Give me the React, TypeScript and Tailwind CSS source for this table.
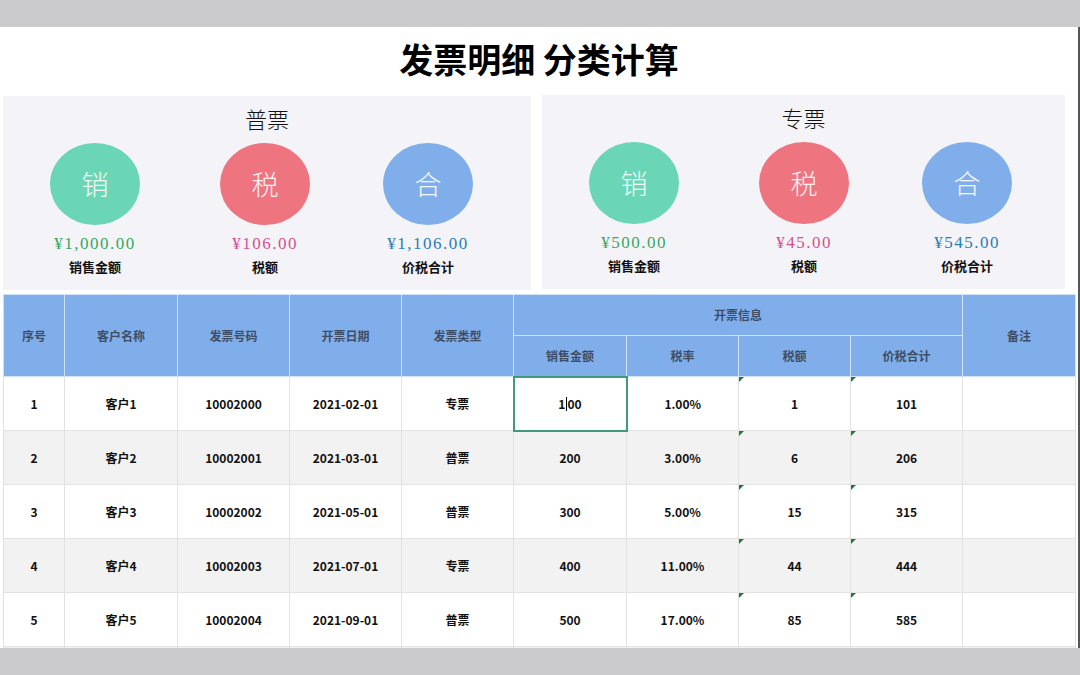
import React from "react";

type Stat = {
  char: string;
  value: string;
  label: string;
  circle: string;
  valueColor: string;
};

type Row = {
  no: number;
  name: string;
  code: string;
  date: string;
  kind: string;
  amount: string;
  rate: string;
  tax: string;
  total: string;
};

const plainStats: Stat[] = [
  { char: "销", value: "¥1,000.00", label: "销售金额", circle: "bg-[#6ad6b6]", valueColor: "text-[#35a866]" },
  { char: "税", value: "¥106.00", label: "税额", circle: "bg-[#ee747f]", valueColor: "text-[#d4508c]" },
  { char: "合", value: "¥1,106.00", label: "价税合计", circle: "bg-[#80aeea]", valueColor: "text-[#2b7db3]" },
];

const specialStats: Stat[] = [
  { char: "销", value: "¥500.00", label: "销售金额", circle: "bg-[#6ad6b6]", valueColor: "text-[#35a866]" },
  { char: "税", value: "¥45.00", label: "税额", circle: "bg-[#ee747f]", valueColor: "text-[#d4508c]" },
  { char: "合", value: "¥545.00", label: "价税合计", circle: "bg-[#80aeea]", valueColor: "text-[#2b7db3]" },
];

const rows: Row[] = [
  { no: 1, name: "客户1", code: "10002000", date: "2021-02-01", kind: "专票", amount: "100", rate: "1.00%", tax: "1", total: "101" },
  { no: 2, name: "客户2", code: "10002001", date: "2021-03-01", kind: "普票", amount: "200", rate: "3.00%", tax: "6", total: "206" },
  { no: 3, name: "客户3", code: "10002002", date: "2021-05-01", kind: "普票", amount: "300", rate: "5.00%", tax: "15", total: "315" },
  { no: 4, name: "客户4", code: "10002003", date: "2021-07-01", kind: "专票", amount: "400", rate: "11.00%", tax: "44", total: "444" },
  { no: 5, name: "客户5", code: "10002004", date: "2021-09-01", kind: "普票", amount: "500", rate: "17.00%", tax: "85", total: "585" },
  { no: 6, name: "", code: "", date: "", kind: "", amount: "", rate: "", tax: "", total: "" },
];

const sans = "font-['Noto_Sans_CJK_SC','Noto_Sans',sans-serif]";
const serif = "font-['Liberation_Serif','Noto_Sans_CJK_SC',serif]";

function SummaryPanel({ title, stats }: { title: string; stats: Stat[] }) {
  return (
    <div className="h-full bg-[#f4f4f8]">
      <div className={`pt-[7px] text-center text-[22px] leading-[30px] font-light text-[#111] ${sans}`}>{title}</div>
      <div className="mt-[10px] grid grid-cols-[170px_170px_156px] pl-[7px]">
        {stats.map((s) => (
          <div key={s.label} className="flex flex-col items-center">
            <div
              className={`flex h-[82px] w-[90px] items-center justify-center rounded-[50%] ${s.circle} text-[27px] font-light text-white/90 ${sans}`}
            >
              {s.char}
            </div>
            <div className={`mt-[9px] text-[17px] leading-[20px] tracking-[1.5px] ${s.valueColor} ${serif}`}>
              {s.value}
            </div>
            <div className={`mt-[4px] text-[13px] leading-[18px] font-bold text-[#111] ${sans}`}>{s.label}</div>
          </div>
        ))}
      </div>
    </div>
  );
}

function Corner() {
  return (
    <span className="absolute left-0 top-0 h-0 w-0 border-t-[5px] border-r-[5px] border-t-[#1f7a3a] border-r-transparent" />
  );
}

export default function App() {
  const head = "border border-[#cfe2f6] bg-[#80aeea] text-[12px] font-bold text-[#3e4d66]";
  const cell = "border border-[#e2e2e2] text-center text-[12px] font-bold text-[#111]";

  return (
    <div className={`flex h-[675px] w-[1080px] flex-col overflow-hidden bg-[#cbcacc] ${sans}`}>
      <div className="h-[27px] shrink-0" />
      <div className="flex h-[621px] shrink-0 flex-col overflow-hidden border-r-[2px] border-r-[#555] bg-white">
        <h1 className="shrink-0 pt-[11px] text-center text-[34px] leading-[42px] font-bold text-black">发票明细 分类计算</h1>
        <div className="mt-[16px] flex h-[194px] shrink-0 gap-[11px] pl-[3px] pr-[13px]">
          <div className="w-[528px]">
            <SummaryPanel title="普票" stats={plainStats} />
          </div>
          <div className="w-[523px] -translate-y-[1px]">
            <SummaryPanel title="专票" stats={specialStats} />
          </div>
        </div>
        <div className="mt-[4px] shrink-0 pl-[3px]">
          <table className="w-[1072px] table-fixed border-collapse">
            <colgroup>
              <col className="w-[61px]" />
              <col className="w-[113px]" />
              <col className="w-[112px]" />
              <col className="w-[112px]" />
              <col className="w-[112px]" />
              <col className="w-[113px]" />
              <col className="w-[112px]" />
              <col className="w-[112px]" />
              <col className="w-[112px]" />
              <col className="w-[113px]" />
            </colgroup>
            <thead>
              <tr className="h-[41px]">
                <th rowSpan={2} className={head}>序号</th>
                <th rowSpan={2} className={head}>客户名称</th>
                <th rowSpan={2} className={head}>发票号码</th>
                <th rowSpan={2} className={head}>开票日期</th>
                <th rowSpan={2} className={head}>发票类型</th>
                <th colSpan={4} className={head}>开票信息</th>
                <th rowSpan={2} className={head}>备注</th>
              </tr>
              <tr className="h-[41px]">
                <th className={head}>销售金额</th>
                <th className={head}>税率</th>
                <th className={head}>税额</th>
                <th className={head}>价税合计</th>
              </tr>
            </thead>
            <tbody>
              {rows.map((r, i) => (
                <tr key={r.no} className={`h-[54px] ${i % 2 === 1 ? "bg-[#f2f2f2]" : "bg-white"}`}>
                  <td className={cell}>{r.no <= 5 ? r.no : ""}</td>
                  <td className={cell}>{r.name}</td>
                  <td className={cell}>{r.code}</td>
                  <td className={cell}>{r.date}</td>
                  <td className={cell}>{r.kind}</td>
                  <td className={i === 0 ? "border-2 border-[#3e9c7c] text-center text-[12px] font-bold text-[#111]" : cell}>
                    {i === 0 ? (
                      <span>
                        1<span className="mx-[0.5px] inline-block h-[14px] w-px translate-y-[2px] bg-black" />00
                      </span>
                    ) : (
                      r.amount
                    )}
                  </td>
                  <td className={cell}>{r.rate}</td>
                  <td className={`relative ${cell}`}>
                    {r.tax && <Corner />}
                    {r.tax}
                  </td>
                  <td className={`relative ${cell}`}>
                    {r.total && <Corner />}
                    {r.total}
                  </td>
                  <td className={cell}></td>
                </tr>
              ))}
            </tbody>
          </table>
        </div>
      </div>
    </div>
  );
}
